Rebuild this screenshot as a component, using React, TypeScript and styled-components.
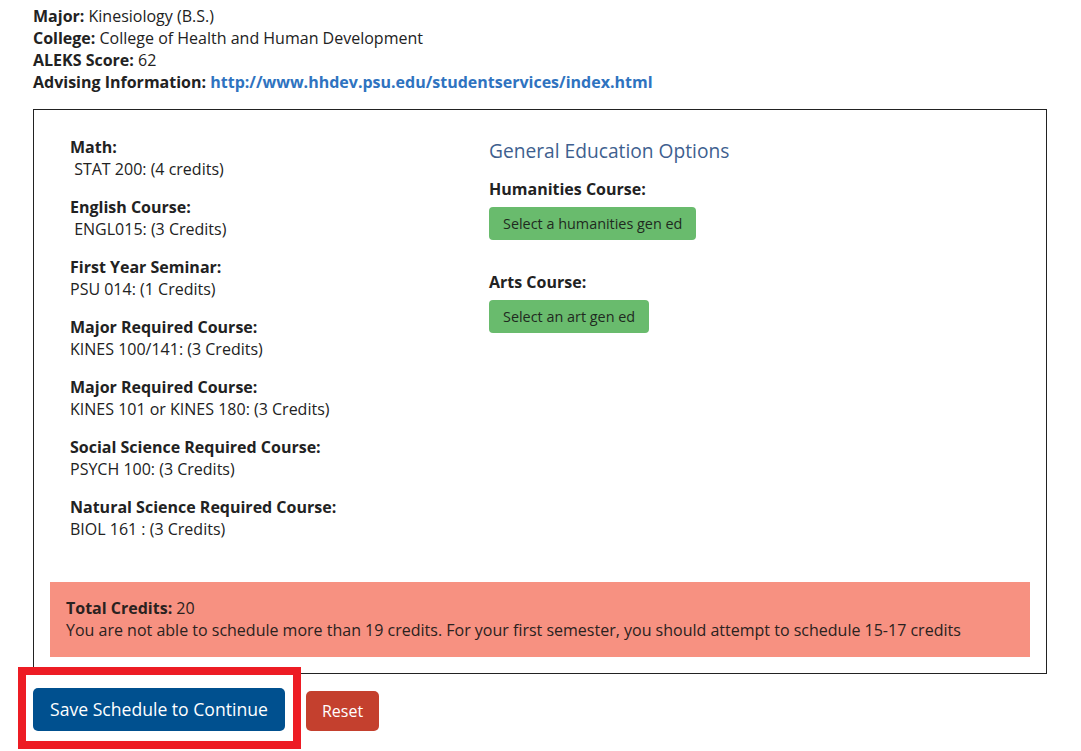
import React from "react";
import styled, { createGlobalStyle } from "styled-components";

const GlobalStyle = createGlobalStyle`
  html, body {
    margin: 0;
    padding: 0;
    background: #fff;
  }
  body {
    font-family: "Open Sans", "Noto Sans", Arial, sans-serif;
    font-size: 16px;
    line-height: 22px;
    color: #222;
  }
`;

interface Requirement {
  label: string;
  value: string;
}

const requirements: Requirement[] = [
  { label: "Math:", value: "\u00a0STAT 200: (4 credits)" },
  { label: "English Course:", value: "\u00a0ENGL015: (3 Credits)" },
  { label: "First Year Seminar:", value: "PSU 014: (1 Credits)" },
  { label: "Major Required Course:", value: "KINES 100/141: (3 Credits)" },
  { label: "Major Required Course:", value: "KINES 101 or KINES 180: (3 Credits)" },
  { label: "Social Science Required Course:", value: "PSYCH 100: (3 Credits)" },
  { label: "Natural Science Required Course:", value: "BIOL 161 : (3 Credits)" },
];

export default function App() {
  return (
    <Page>
      <GlobalStyle />
      <Info>
        <div>
          <b>Major:</b> Kinesiology (B.S.)
        </div>
        <div>
          <b>College:</b> College of Health and Human Development
        </div>
        <div>
          <b>ALEKS Score:</b> 62
        </div>
        <div>
          <b>Advising Information:</b>{" "}
          <Link href="#">http://www.hhdev.psu.edu/studentservices/index.html</Link>
        </div>
      </Info>

      <Panel>
        <Columns>
          <div>
            {requirements.map((r, i) => (
              <Group key={i}>
                <b>{r.label}</b>
                <div>{r.value}</div>
              </Group>
            ))}
          </div>
          <div>
            <GenEdTitle>General Education Options</GenEdTitle>
            <GenEdLabel>Humanities Course:</GenEdLabel>
            <GreenButton>Select a humanities gen ed</GreenButton>
            <GenEdLabel $spaced>Arts Course:</GenEdLabel>
            <GreenButton>Select an art gen ed</GreenButton>
          </div>
        </Columns>
        <Alert>
          <div>
            <b>Total Credits:</b> 20
          </div>
          <div>
            You are not able to schedule more than 19 credits. For your first
            semester, you should attempt to schedule 15-17 credits
          </div>
        </Alert>
      </Panel>

      <Actions>
        <Highlight>
          <SaveButton>Save Schedule to Continue</SaveButton>
        </Highlight>
        <ResetButton>Reset</ResetButton>
      </Actions>
    </Page>
  );
}

const Page = styled.div`
  padding: 5px 34px 30px 33px;
`;

const Info = styled.div`
  margin-bottom: 16px;

  b {
    font-weight: 700;
  }
`;

const Link = styled.a`
  color: #2f73c0;
  font-weight: 700;
  text-decoration: none;
`;

const Panel = styled.div`
  border: 1px solid #222;
  padding: 16px;
`;

const Columns = styled.div`
  display: grid;
  grid-template-columns: 419px 1fr;
  padding: 10px 20px 10px 20px;
`;

const Group = styled.div`
  margin-bottom: 16px;
  line-height: 22px;

  b {
    display: block;
    font-weight: 700;
  }
`;

const GenEdTitle = styled.h3`
  margin: 1px 0 13px;
  font-size: 19.2px;
  font-weight: 400;
  line-height: 28px;
  color: #3e5f8f;
`;

const GenEdLabel = styled.div<{ $spaced?: boolean }>`
  font-weight: 700;
  margin-top: ${(p) => (p.$spaced ? "31px" : "0")};
  margin-bottom: 7px;
`;

const GreenButton = styled.button`
  display: block;
  font-family: inherit;
  font-size: 14.4px;
  line-height: 21px;
  padding: 6px 14px 6px 14px;
  background: #69bb6d;
  color: #1f2a1f;
  border: none;
  border-radius: 4px;
  cursor: pointer;
`;

const Alert = styled.div`
  margin-top: 16px;
  background: #f79181;
  padding: 15px 16px 16px;
  color: #2a2220;

  b {
    font-weight: 700;
  }
`;

const Actions = styled.div`
  display: flex;
  align-items: flex-end;
  gap: 21px;
  margin-top: 14px;
`;

const Highlight = styled.div`
  position: relative;
  display: flex;

  &::after {
    content: "";
    position: absolute;
    top: -21px;
    left: -15px;
    right: -16px;
    bottom: -18px;
    border: 8px solid #ed1c24;
    pointer-events: none;
  }
`;

const SaveButton = styled.button`
  font-family: inherit;
  font-size: 17.6px;
  line-height: 25px;
  padding: 9px 17px;
  background: #00508f;
  color: #fff;
  border: none;
  border-radius: 5px;
  cursor: pointer;
`;

const ResetButton = styled.button`
  font-family: inherit;
  font-size: 16px;
  line-height: 22px;
  padding: 9px 16px;
  background: #c4402e;
  color: #fff;
  border: none;
  border-radius: 5px;
  cursor: pointer;
`;
